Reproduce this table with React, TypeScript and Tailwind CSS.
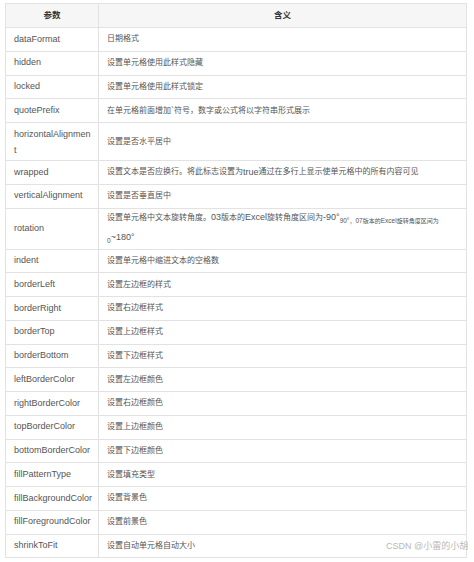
import React from "react";

function T({ s, small }: { s: string; small?: boolean }) {
  const parts = s.split(/([\x00-\x7F°~]+)/).filter((p) => p.length > 0);
  return (
    <>
      {parts.map((p, i) =>
        /^[\x00-\x7F°~]+$/.test(p) ? (
          <span key={i} className={small ? "text-[6.5px]" : "text-[9px]"}>
            {p}
          </span>
        ) : (
          <span key={i}>{p}</span>
        )
      )}
    </>
  );
}

type Row = { k: React.ReactNode; v: React.ReactNode; h?: string };

const rows: Row[] = [
  { k: "dataFormat", v: <T s="日期格式" /> },
  { k: "hidden", v: <T s="设置单元格使用此样式隐藏" /> },
  { k: "locked", v: <T s="设置单元格使用此样式锁定" /> },
  { k: "quotePrefix", v: <T s="在单元格前面增加`符号，数字或公式将以字符串形式展示" /> },
  {
    k: (
      <span className="leading-[16px]">
        horizontalAlignmen
        <br />t
      </span>
    ),
    v: <T s="设置是否水平居中" />,
    h: "h-[38px]",
  },
  { k: "wrapped", v: <T s="设置文本是否应换行。将此标志设置为true通过在多行上显示使单元格中的所有内容可见" /> },
  { k: "verticalAlignment", v: <T s="设置是否垂直居中" /> },
  {
    k: "rotation",
    v: (
      <span className="leading-[16px]">
        <T s="设置单元格中文本旋转角度。03版本的Excel旋转角度区间为-90°" />
        <span className="text-[6px] align-sub">
          <T s="90°，07版本的Excel旋转角度区间为" small />
        </span>
        <br />
        <span className="text-[6.5px] align-sub">0</span>
        <span className="text-[9px]">~180°</span>
      </span>
    ),
    h: "h-[41px]",
  },
  { k: "indent", v: <T s="设置单元格中缩进文本的空格数" /> },
  { k: "borderLeft", v: <T s="设置左边框的样式" /> },
  { k: "borderRight", v: <T s="设置右边框样式" /> },
  { k: "borderTop", v: <T s="设置上边框样式" /> },
  { k: "borderBottom", v: <T s="设置下边框样式" /> },
  { k: "leftBorderColor", v: <T s="设置左边框颜色" /> },
  { k: "rightBorderColor", v: <T s="设置右边框颜色" /> },
  { k: "topBorderColor", v: <T s="设置上边框颜色" /> },
  { k: "bottomBorderColor", v: <T s="设置下边框颜色" /> },
  { k: "fillPatternType", v: <T s="设置填充类型" /> },
  { k: "fillBackgroundColor", v: <T s="设置背景色" /> },
  { k: "fillForegroundColor", v: <T s="设置前景色" /> },
  { k: "shrinkToFit", v: <T s="设置自动单元格自动大小" /> },
];

export default function App() {
  return (
    <div
      className="relative w-[474px] h-[562px] bg-white overflow-hidden pt-[3px] pl-[5px] text-[9px] text-[#555]"
      style={{ fontFamily: '"Liberation Sans", "Noto Sans CJK SC", sans-serif' }}
    >
      <div className="w-[462px] border-x border-t border-[#e2e2e2]">
        <div className="flex h-[24px] border-b border-[#e2e2e2] bg-[#f6f6f6] font-bold text-[8.5px] text-[#333]">
          <div className="w-[93px] shrink-0 border-r border-[#e2e2e2] flex items-center justify-center">参数</div>
          <div className="flex-1 flex items-center justify-center">含义</div>
        </div>
        {rows.map((r, i) => (
          <div key={i} className={`flex border-b border-[#e2e2e2] ${r.h ?? "h-[23.75px]"}`}>
            <div className="w-[93px] shrink-0 border-r border-[#e2e2e2] flex items-center pl-[8px] whitespace-nowrap">
              {r.k}
            </div>
            <div className="flex-1 flex items-center pl-[8px] whitespace-nowrap text-[8px]">{r.v}</div>
          </div>
        ))}
      </div>
      <div className="absolute left-[386px] top-[540px] text-[9px] text-[#b8b8b8] whitespace-nowrap">
        CSDN @小雷的小胡
      </div>
    </div>
  );
}
